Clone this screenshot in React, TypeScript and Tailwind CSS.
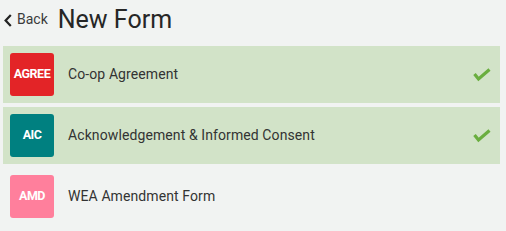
import React from "react";

type FormItem = {
  code: string;
  title: string;
  color: string;
  done: boolean;
};

const FORMS: FormItem[] = [
  { code: "AGREE", title: "Co-op Agreement", color: "bg-[#e32427]", done: true },
  { code: "AIC", title: "Acknowledgement & Informed Consent", color: "bg-[#008080]", done: true },
  { code: "AMD", title: "WEA Amendment Form", color: "bg-[#ff7f9c]", done: false },
];

function Check() {
  return (
    <svg width="18" height="14" viewBox="0 0 18 14" aria-hidden>
      <polyline
        points="1.5,6 5.5,11 16.5,1.5"
        fill="none"
        stroke="#6aae3f"
        strokeWidth="3.2"
        strokeLinecap="butt"
        strokeLinejoin="miter"
      />
    </svg>
  );
}

export default function App() {
  return (
    <div className="min-h-[231px] w-[506px] bg-[#f1f3f2] font-['Roboto',sans-serif] text-[#333]">
      <header className="flex h-[46px] items-center pl-[4px] pb-[8px]">
        <button className="flex items-center gap-[5px] text-[14px] text-[#3a3a3a]">
          <svg width="8" height="13" viewBox="0 0 8 13" aria-hidden className="mt-[3px]">
            <polyline points="6.8,1 1.6,6.5 6.8,12" fill="none" stroke="#222" strokeWidth="2.2" />
          </svg>
          <span>Back</span>
        </button>
        <h1 className="ml-[10px] text-[25px] leading-none text-[#262626]">New Form</h1>
      </header>

      <ul className="ml-[3px] mr-[6px] flex flex-col gap-[4px]">
        {FORMS.map((form) => (
          <li
            key={form.code}
            className={`flex h-[57px] items-center pl-[7px] pr-[9px] ${form.done ? "bg-[#d2e3c8]" : ""}`}
          >
            <div
              className={`flex h-[43px] w-[44px] shrink-0 items-center justify-center rounded-[3px] ${form.color} text-[12.5px] font-bold tracking-[-0.5px] text-white`}
            >
              {form.code}
            </div>
            <span className="ml-[14px] flex-1 text-[14px] tracking-[0.1px]">{form.title}</span>
            {form.done && <Check />}
          </li>
        ))}
      </ul>
    </div>
  );
}
